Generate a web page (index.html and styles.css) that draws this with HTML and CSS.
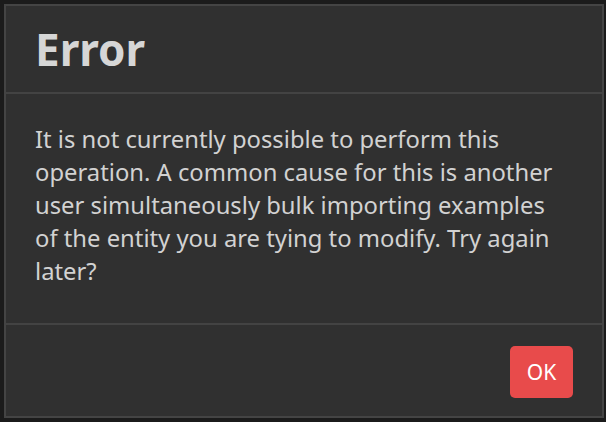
FILE: index.html
```html
<!DOCTYPE html>
<html>
<head>
<meta charset="utf-8">
<link rel="stylesheet" href="styles.css">
</head>
<body>
<div class="dialog">
  <div class="header"><h1 class="title">Error</h1></div>
  <div class="content">
    <p class="message">It is not currently possible to perform this operation. A common cause for this is another user simultaneously bulk importing examples of the entity you are tying to modify. Try again later?</p>
  </div>
  <div class="footer"><button class="ok">OK</button></div>
</div>
</body>
</html>
```
FILE: styles.css
```css
html, body {
  margin: 0;
  padding: 0;
  background: #1b1b1b;
  width: 606px;
  height: 422px;
  overflow: hidden;
}
body {
  padding: 4px;
  box-sizing: border-box;
  font-family: "Noto Sans", "Open Sans", sans-serif;
}
.dialog {
  width: 600px;
  height: 414px;
  box-sizing: border-box;
  background: #303030;
  border: 2px solid #444444;
  display: flex;
  flex-direction: column;
}
.header {
  height: 86px;
  border-bottom: 2px solid #434343;
  display: flex;
  align-items: center;
  padding-left: 29px;
}
.title {
  margin: 0;
  font-size: 44px;
  font-weight: 700;
  color: #d6d6d6;
  line-height: 1;
}
.content {
  height: 231px;
  border-bottom: 2px solid #434343;
  padding: 29px 0 0 29px;
  box-sizing: border-box;
}
.message {
  margin: 0;
  width: 530px;
  font-size: 23.8px;
  line-height: 33px;
  color: #d2d2d2;
}
.footer {
  flex: 1;
  display: flex;
  justify-content: flex-end;
  align-items: flex-start;
  padding: 21px 29px 0 0;
}
.ok {
  width: 63px;
  height: 52px;
  border: none;
  border-radius: 5px;
  background: #e84b4b;
  color: #ffffff;
  font-family: inherit;
  font-size: 21px;
  padding: 0;
}
```
